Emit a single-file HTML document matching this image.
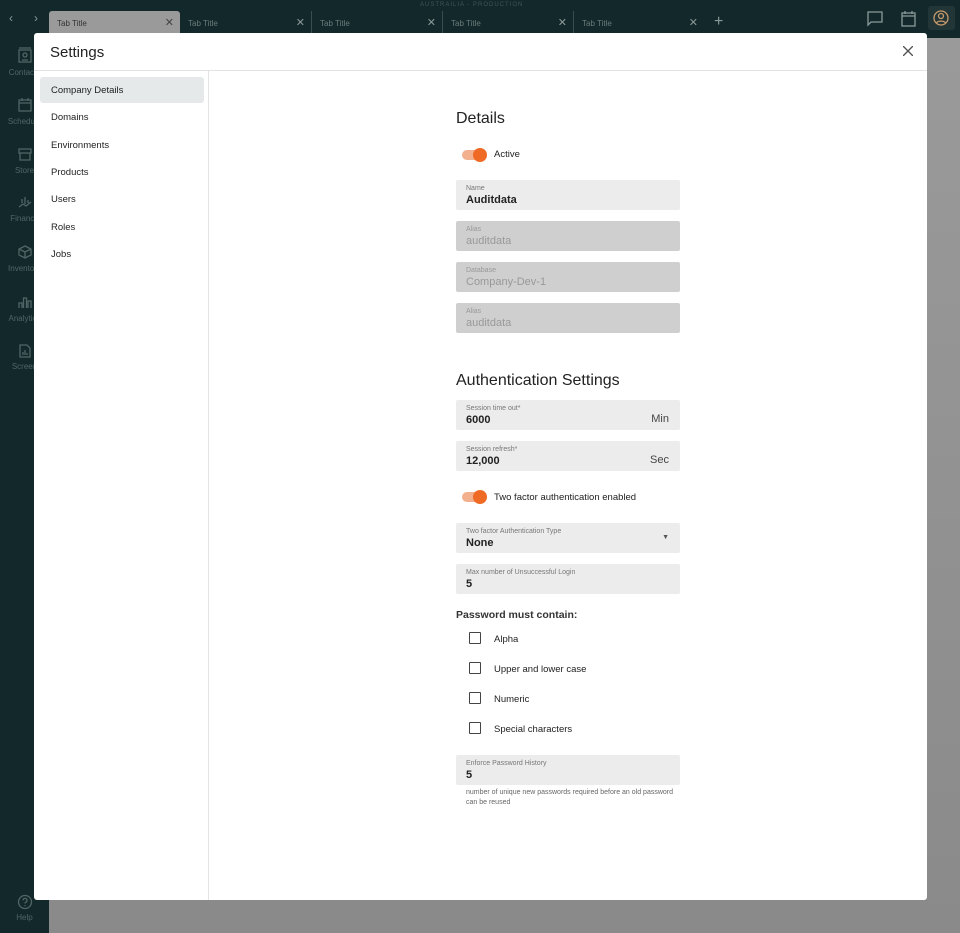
<!DOCTYPE html>
<html><head><style>
*{box-sizing:border-box;margin:0;padding:0}
body{width:960px;height:933px;overflow:hidden;background:#888;font-family:"Liberation Sans",sans-serif;position:relative}
.top{position:absolute;left:0;top:0;width:960px;height:38px;background:#13282a}
.side{position:absolute;left:0;top:0;width:49px;height:933px;background:#13282a}
.gray{position:absolute;left:49px;top:38px;right:0;bottom:0;background:linear-gradient(#9a9a9a,#8a8a8a)}
.tab{position:absolute;top:11px;height:22px;font-size:8px;color:#6b7b7b;padding:8px 8px}
.tab .x{position:absolute;right:6px;top:5px;font-size:11px;color:#8a9898}
.sl{position:absolute;left:0;width:49px;text-align:center;font-size:8px;color:#4f6566}
.si{position:absolute;left:17px}
.modal{position:absolute;left:34px;top:33px;width:893px;height:867px;background:#fff;border-radius:3px}
.hdr{height:38px;border-bottom:1px solid #e3e3e3;font-size:15px;color:#222;padding:11px 16px}
.nav{position:absolute;left:0;top:38px;width:175px;bottom:0;border-right:1px solid #e3e3e3}
.ni{position:absolute;left:6px;width:164px;height:26px;font-size:9.5px;color:#222;padding:8px 11px}
.fld{position:absolute;left:422px;width:224px;height:30px;background:#ececec;border-radius:2px;padding:5px 10px}
.fld.d{background:#cfcfcf}
.fld .l{font-size:7px;color:#777;line-height:8px}
.fld .v{font-size:11px;color:#222;font-weight:bold;line-height:14px}
.fld.d .l{color:#999}.fld.d .v{color:#999;font-weight:normal}
.fld .u{position:absolute;right:11px;top:13px;font-size:11px;color:#444}
.h{position:absolute;left:422px;font-size:16px;color:#222}
.tg{position:absolute;left:428px;width:24px;height:10px;border-radius:5px;background:#f3b08e}
.tg:after{content:"";position:absolute;right:-1px;top:-2px;width:14px;height:14px;border-radius:50%;background:#ef6a25}
.lb{position:absolute;left:460px;font-size:9.5px;color:#222}
.cb{position:absolute;left:435px;width:12px;height:12px;border:1.5px solid #444;border-radius:1px}
</style></head><body>
<div class="top"></div><div class="side"></div><div class="gray"></div>
<div style="position:absolute;left:420px;top:2px;font-size:6px;color:#3e5556;letter-spacing:1px">AUSTRAILIA - PRODUCTION</div>
<div style="position:absolute;left:9px;top:11px;color:#8a9a9a;font-size:12px">‹</div>
<div style="position:absolute;left:34px;top:11px;color:#8a9a9a;font-size:12px">›</div>
<div class="tab" style="left:49px;width:131px;background:#9a9a9a;color:#333;border-radius:3px 3px 0 0">Tab Title<span class="x" style="color:#444">✕</span></div>
<div class="tab" style="left:180px;width:131px">Tab Title<span class="x">✕</span></div>
<div class="tab" style="left:311px;width:131px;border-left:1px solid #3a4e4f">Tab Title<span class="x">✕</span></div>
<div class="tab" style="left:442px;width:131px;border-left:1px solid #3a4e4f">Tab Title<span class="x">✕</span></div>
<div class="tab" style="left:573px;width:131px;border-left:1px solid #3a4e4f">Tab Title<span class="x">✕</span></div>
<div style="position:absolute;left:714px;top:13px;color:#8a9a9a;font-size:16px">+</div>
<svg style="position:absolute;left:866px;top:10px" width="18" height="18" fill="none" stroke="#8a9a9a" stroke-width="1.3"><path d="M2 2h14v10H5l-3 3z"/></svg>
<svg style="position:absolute;left:900px;top:10px" width="18" height="18" fill="none" stroke="#8a9a9a" stroke-width="1.3"><rect x="2" y="3" width="13" height="13"/><path d="M2 6h13M5 1v3M12 1v3"/></svg>
<div style="position:absolute;left:928px;top:6px;width:27px;height:24px;background:#223537;border-radius:3px"></div>
<svg style="position:absolute;left:932px;top:9px" width="18" height="18" fill="none" stroke="#c89a6a" stroke-width="1.3"><circle cx="9" cy="9" r="7"/><circle cx="9" cy="7" r="2.5"/><path d="M4.5 14c1-2.5 8-2.5 9 0"/></svg>
<svg class="si" style="top:47px" width="16" height="18" fill="none" stroke="#4f6566" stroke-width="1.3"><rect x="2" y="3" width="12" height="12"/><circle cx="8" cy="8" r="2"/><path d="M2 1h12M5 13h6"/></svg>
<svg class="si" style="top:97px" width="16" height="16" fill="none" stroke="#4f6566" stroke-width="1.3"><rect x="2" y="3" width="12" height="11"/><path d="M2 6h12M5 1v3M11 1v3"/></svg>
<svg class="si" style="top:146px" width="16" height="16" fill="none" stroke="#4f6566" stroke-width="1.3"><rect x="2" y="3" width="12" height="4"/><path d="M3 7v7h10V7"/></svg>
<svg class="si" style="top:195px" width="16" height="16" fill="none" stroke="#4f6566" stroke-width="1.3"><path d="M2 12l4-3 3 2 5-4M5 8V4M8 9V2M11 8V5"/></svg>
<svg class="si" style="top:244px" width="16" height="16" fill="none" stroke="#4f6566" stroke-width="1.3"><path d="M8 2l6 3v6l-6 3-6-3V5zM2 5l6 3 6-3M8 8v6"/></svg>
<svg class="si" style="top:294px" width="16" height="16" fill="none" stroke="#4f6566" stroke-width="1.3"><path d="M2 14V9h3v5M6.5 14V4h3v10M11 14V7h3v7"/></svg>
<svg class="si" style="top:343px" width="16" height="16" fill="none" stroke="#4f6566" stroke-width="1.3"><path d="M3 2h7l3 3v9H3zM6 12V9M8 12V7M10 12v-2"/></svg>
<div class="sl" style="top:68px">Contacts</div><div class="sl" style="top:117px">Schedule</div><div class="sl" style="top:166px">Store</div><div class="sl" style="top:214px">Finance</div><div class="sl" style="top:264px">Inventory</div><div class="sl" style="top:314px">Analytics</div><div class="sl" style="top:362px">Screen</div>
<svg style="position:absolute;left:17px;top:894px" width="16" height="16" fill="none" stroke="#4f6566" stroke-width="1.3"><circle cx="8" cy="8" r="6.5"/><path d="M6 6.3a2 2 0 1 1 2.5 2c-.4.2-.5.5-.5 1.2M8 11v1"/></svg>
<div class="sl" style="top:913px">Help</div>
<div class="modal">
<div class="hdr">Settings<svg style="position:absolute;right:14px;top:13px" width="10" height="10" stroke="#555" stroke-width="1.4"><path d="M0 0l10 10M10 0L0 10"/></svg></div>
<div class="nav">
<div class="ni" style="top:6px;background:#e5e9e9;border-radius:3px">Company Details</div>
<div class="ni" style="top:33px">Domains</div><div class="ni" style="top:61px">Environments</div><div class="ni" style="top:88px">Products</div><div class="ni" style="top:115px">Users</div><div class="ni" style="top:143px">Roles</div><div class="ni" style="top:170px">Jobs</div>
</div>
<div class="h" style="top:77px">Details</div>
<div class="tg" style="top:117px"></div><div class="lb" style="top:116px">Active</div>
<div class="fld" style="top:147px"><div class="l">Name</div><div class="v">Auditdata</div></div>
<div class="fld d" style="top:188px"><div class="l">Alias</div><div class="v">auditdata</div></div>
<div class="fld d" style="top:229px"><div class="l">Database</div><div class="v">Company-Dev-1</div></div>
<div class="fld d" style="top:270px"><div class="l">Alias</div><div class="v">auditdata</div></div>
<div class="h" style="top:339px">Authentication Settings</div>
<div class="fld" style="top:367px"><div class="l">Session time out*</div><div class="v">6000</div><span class="u">Min</span></div>
<div class="fld" style="top:408px"><div class="l">Session refresh*</div><div class="v">12,000</div><span class="u">Sec</span></div>
<div class="tg" style="top:459px"></div><div class="lb" style="top:459px">Two factor authentication enabled</div>
<div class="fld" style="top:490px"><div class="l">Two factor Authentication Type</div><div class="v">None</div><span class="u" style="font-size:7px;top:11px;color:#555">▼</span></div>
<div class="fld" style="top:531px"><div class="l">Max number of Unsuccessful Login</div><div class="v">5</div></div>
<div class="lb" style="left:422px;top:576px;font-size:10.5px;font-weight:bold;color:#333">Password must contain:</div>
<div class="cb" style="top:599px"></div><div class="lb" style="top:601px">Alpha</div>
<div class="cb" style="top:629px"></div><div class="lb" style="top:631px">Upper and lower case</div>
<div class="cb" style="top:659px"></div><div class="lb" style="top:661px">Numeric</div>
<div class="cb" style="top:689px"></div><div class="lb" style="top:691px">Special characters</div>
<div class="fld" style="top:722px"><div class="l">Enforce Password History</div><div class="v">5</div></div>
<div class="lb" style="left:432px;top:755px;font-size:7px;color:#666;line-height:10px;width:215px">number of unique new passwords required before an old password can be reused</div>
</div>
</body></html>
